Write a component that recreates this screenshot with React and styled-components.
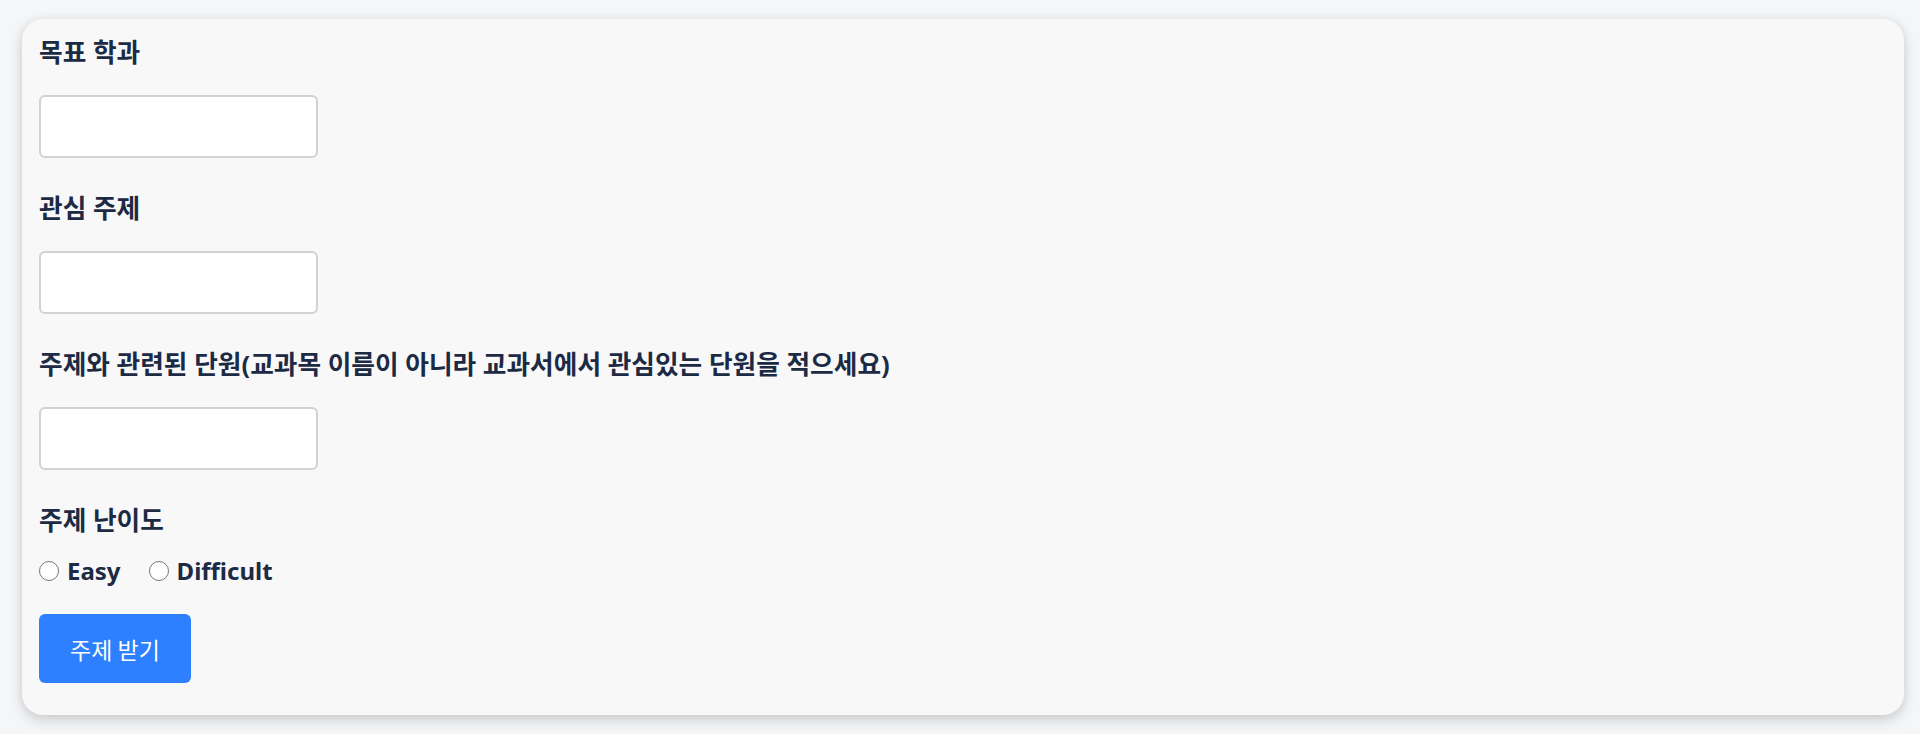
import styled, { createGlobalStyle } from "styled-components";

const GlobalStyle = createGlobalStyle`
  html, body {
    margin: 0;
    padding: 0;
    background: #f5f6f8;
  }
  body {
    font-family: "Noto Sans", "Noto Sans CJK KR", sans-serif;
  }
`;

const Page = styled.div`
  padding: 19px 16px 19px 22px;
`;

const Card = styled.form`
  background: #f8f8f9;
  border-radius: 21px;
  box-shadow: 0 5px 14px rgba(0, 0, 0, 0.16), 0 0 8px rgba(0, 0, 0, 0.05);
  padding: 16px 17px 32px;
  display: flex;
  flex-direction: column;
  align-items: flex-start;
`;

const Field = styled.div`
  display: flex;
  flex-direction: column;
  align-items: flex-start;
  margin-bottom: ${(p) => p.$after || 33}px;
`;

const Label = styled.label`
  font-size: 25.7px;
  line-height: 36px;
  font-weight: 700;
  color: #1c2a44;
  margin-bottom: ${(p) => p.$gap || 24}px;
`;

const TextInput = styled.input`
  box-sizing: border-box;
  width: 279px;
  height: 63px;
  border: 2px solid #d2d2d2;
  border-radius: 6px;
  background: #fff;
  padding: 0 12px;
  font-size: 20px;
  font-family: inherit;
  outline: none;
`;

const RadioRow = styled.div`
  display: flex;
  align-items: center;
  gap: 28px;
  height: 36px;
`;

const RadioOption = styled.label`
  display: flex;
  align-items: center;
  gap: 8px;
  font-size: 24px;
  font-weight: 700;
  color: #1c2a44;
  cursor: pointer;

  & input {
    width: 20px;
    height: 20px;
    margin: 1px 0 0;
  }
`;

const SubmitButton = styled.button`
  height: 69px;
  padding: 0 31px;
  border: none;
  border-radius: 6px;
  background: #2d80ff;
  color: #fff;
  font-family: "Noto Sans CJK KR", sans-serif;
  font-size: 23px;
  font-weight: 400;
  cursor: pointer;
`;

const fields = [
  { id: "major", label: "목표 학과" },
  { id: "interest", label: "관심 주제" },
  { id: "unit", label: "주제와 관련된 단원(교과목 이름이 아니라 교과서에서 관심있는 단원을 적으세요)" },
];

export default function App() {
  return (
    <Page>
      <GlobalStyle />
      <Card onSubmit={(e) => e.preventDefault()}>
        {fields.map((f) => (
          <Field key={f.id}>
            <Label htmlFor={f.id}>{f.label}</Label>
            <TextInput id={f.id} type="text" />
          </Field>
        ))}
        <Field $after={26}>
          <Label $gap={13}>주제 난이도</Label>
          <RadioRow>
            <RadioOption>
              <input type="radio" name="level" value="easy" />
              Easy
            </RadioOption>
            <RadioOption>
              <input type="radio" name="level" value="difficult" />
              Difficult
            </RadioOption>
          </RadioRow>
        </Field>
        <SubmitButton type="submit">주제 받기</SubmitButton>
      </Card>
    </Page>
  );
}
